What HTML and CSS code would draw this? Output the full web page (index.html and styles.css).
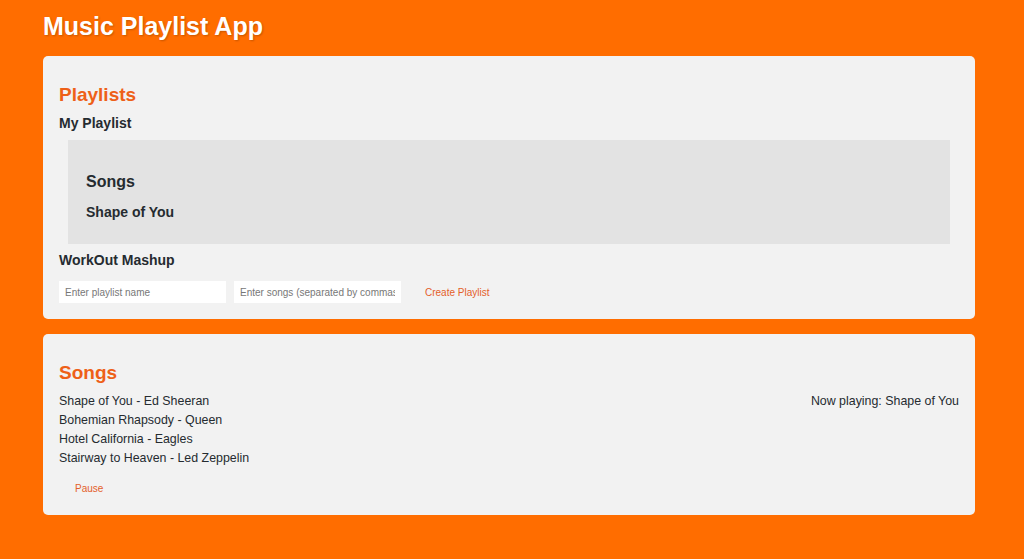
FILE: index.html
```html
<!DOCTYPE html>
<html>
<head>
<meta charset="utf-8">
<link rel="stylesheet" href="styles.css">
</head>
<body>
<div class="app">
  <h1 class="title">Music Playlist App</h1>
  <section class="card playlists">
    <h2 class="card-title">Playlists</h2>
    <div class="playlist">
      <h3 class="playlist-name">My Playlist</h3>
      <div class="playlist-songs">
        <h4 class="songs-title">Songs</h4>
        <p class="song-name">Shape of You</p>
      </div>
    </div>
    <div class="playlist">
      <h3 class="playlist-name">WorkOut Mashup</h3>
    </div>
    <form class="create-form">
      <input class="field" type="text" placeholder="Enter playlist name">
      <input class="field" type="text" placeholder="Enter songs (separated by commas)">
      <button class="link-btn" type="button">Create Playlist</button>
    </form>
  </section>
  <section class="card songs">
    <h2 class="card-title">Songs</h2>
    <div class="songs-row">
      <ul class="song-list">
        <li>Shape of You - Ed Sheeran</li>
        <li>Bohemian Rhapsody - Queen</li>
        <li>Hotel California - Eagles</li>
        <li>Stairway to Heaven - Led Zeppelin</li>
      </ul>
      <p class="now-playing">Now playing: Shape of You</p>
    </div>
    <button class="link-btn pause" type="button">Pause</button>
  </section>
</div>
</body>
</html>
```
FILE: styles.css
```css
html, body {
  margin: 0;
  padding: 0;
}
body {
  background: #ff6d00;
  font-family: "Liberation Sans", Arial, sans-serif;
  color: #252b30;
  height: 559px;
  overflow: hidden;
}
.app {
  width: 932px;
  padding: 12px 0 0 43px;
}
.title {
  margin: 0 0 16px;
  font-size: 25px;
  line-height: 28px;
  color: #fff;
  font-weight: bold;
  text-shadow: 1px 1px 2px rgba(0,0,0,0.22);
}
.card {
  background: #f2f2f2;
  border-radius: 5px;
  padding: 16px 16px;
  margin-bottom: 15px;
}
.songs {
  padding-bottom: 17px;
}
.card-title {
  margin: 12px 0 8px;
  font-size: 19px;
  line-height: 22px;
  color: #ee6018;
}
.playlist-name {
  margin: 0;
  font-size: 14px;
  line-height: 18px;
  padding-bottom: 8px;
}
.playlist-songs {
  background: #e3e3e3;
  margin: 0 9px 7px;
  padding: 32px 18px 23px;
}
.songs-title {
  margin: 0 0 11px;
  font-size: 16px;
  line-height: 20px;
}
.song-name {
  margin: 0;
  font-size: 14px;
  font-weight: bold;
  line-height: 18px;
}
.create-form {
  display: flex;
  align-items: center;
  gap: 8px;
  margin-top: 4px;
}
.field {
  width: 167px;
  height: 22px;
  box-sizing: border-box;
  border: none;
  background: #fff;
  padding: 0 6px;
  font-family: "Liberation Sans", Arial, sans-serif;
  font-size: 10px;
  color: #333;
  outline: none;
}
.field::placeholder {
  color: #777;
}
.link-btn {
  background: none;
  border: none;
  color: #e4602a;
  font-family: "Liberation Sans", Arial, sans-serif;
  font-size: 10px;
  padding: 4px 16px;
  cursor: pointer;
}
.songs-row {
  display: flex;
  justify-content: space-between;
  align-items: flex-start;
}
.song-list {
  list-style: none;
  margin: 0;
  padding: 0;
  font-size: 12.4px;
  line-height: 19px;
}
.now-playing {
  margin: 0;
  font-size: 12.4px;
  line-height: 19px;
}
.pause {
  margin-top: 11px;
  padding: 4px 16px;
}
```
